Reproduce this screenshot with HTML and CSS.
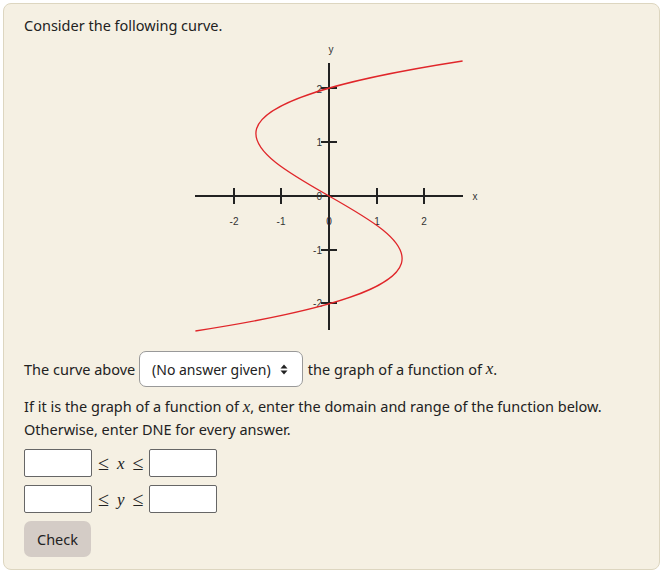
FILE: index.html
```html
<!DOCTYPE html>
<html>
<head>
<meta charset="utf-8">
<link rel="stylesheet" href="styles.css">
</head>
<body>
<div class="card">
  <p class="intro">Consider the following curve.</p>
  <svg class="graph" width="300" height="300" viewBox="180 38 300 300" xmlns="http://www.w3.org/2000/svg">
    <g stroke="#222" stroke-width="2" fill="none">
      <line x1="195" y1="195" x2="463" y2="195"/>
      <line x1="329" y1="62" x2="329" y2="329"/>
      <line x1="234" y1="187" x2="234" y2="203"/>
      <line x1="281" y1="187" x2="281" y2="203"/>
      <line x1="377" y1="187" x2="377" y2="203"/>
      <line x1="424" y1="187" x2="424" y2="203"/>
      <line x1="321" y1="87" x2="337" y2="87"/>
      <line x1="321" y1="141" x2="337" y2="141"/>
      <line x1="321" y1="249" x2="337" y2="249"/>
      <line x1="321" y1="302" x2="337" y2="302"/>
    </g>
    <g class="lbl" fill="#333">
      <text x="331" y="52" text-anchor="middle">y</text>
      <text x="475" y="199" text-anchor="middle">x</text>
      <text x="234" y="224" text-anchor="middle">-2</text>
      <text x="281" y="224" text-anchor="middle">-1</text>
      <text x="329" y="224" text-anchor="middle" fill="#223">0</text>
      <text x="377" y="224" text-anchor="middle">1</text>
      <text x="424" y="224" text-anchor="middle">2</text>
      <text x="322" y="92" text-anchor="end">2</text>
      <text x="322" y="145" text-anchor="end">1</text>
      <text x="322" y="199" text-anchor="end">0</text>
      <text x="322" y="253" text-anchor="end">-1</text>
      <text x="322" y="306" text-anchor="end">-2</text>
    </g>
    <path d="M195.41 330 C779.26 240 -121.26 150 462.59 60" stroke="#e0262a" stroke-width="1.3" fill="none"/>
  </svg>
  <p class="line">The curve above <span class="select">(No answer given)<span class="arrows"><svg width="8" height="11" viewBox="0 0 8 11"><path d="M4 0.5L7.5 4.5H0.5Z M4 10.5L7.5 6.5H0.5Z" fill="#222"/></svg></span></span> the graph of a function of <i class="m">x</i>.</p>
  <p class="para">If it is the graph of a function of <i class="m">x</i>, enter the domain and range of the function below.<br>Otherwise, enter DNE for every answer.</p>
  <div class="ineq">
    <span class="box"></span><span class="rel le1">≤</span><i class="m mv">x</i><span class="rel le2">≤</span><span class="box"></span>
  </div>
  <div class="ineq">
    <span class="box"></span><span class="rel le1">≤</span><i class="m mv">y</i><span class="rel le2">≤</span><span class="box"></span>
  </div>
  <button class="check">Check</button>
</div>
</body>
</html>
```
FILE: styles.css
```css
html, body {
  margin: 0;
  padding: 0;
  background: #ffffff;
}
body {
  font-family: "Noto Sans", "DejaVu Sans", sans-serif;
  font-size: 14.5px;
  color: #222;
}
.card {
  margin: 3px;
  width: 657px;
  height: 567px;
  box-sizing: border-box;
  border: 1px solid #ddd6c0;
  border-radius: 8px;
  background: #f5f0e3;
  padding: 10px 20px;
}
.intro {
  margin: 0;
  line-height: 22px;
}
.graph {
  display: block;
  margin: 3px 0 0 156px;
}
.lbl text {
  font-family: "Liberation Sans", Arial, sans-serif;
  font-size: 10px;
}
.line {
  margin: 12px 0 0 0;
  display: flex;
  align-items: center;
  white-space: pre;
}
.select {
  display: inline-flex;
  align-items: center;
  box-sizing: border-box;
  width: 164px;
  height: 36px;
  padding: 0 0 0 12px;
  margin: 0 1px 0 0;
  background: #fff;
  border: 1px solid #999;
  border-radius: 7px;
  font-size: 14px;
}
.arrows {
  display: inline-flex;
  margin-left: 9px;
}
.m {
  font-family: "Liberation Serif", "DejaVu Serif", serif;
  font-style: italic;
  font-size: 17px;
}
.para {
  margin: 8px 0 0 0;
  line-height: 22px;
}
.ineq {
  display: flex;
  align-items: center;
  margin-top: 9px;
}
.ineq + .ineq {
  margin-top: 8px;
}
.box {
  display: block;
  width: 68px;
  height: 28px;
  box-sizing: border-box;
  background: #fff;
  border: 1px solid #666;
  border-radius: 2px;
}
.rel {
  font-family: "Liberation Serif", "DejaVu Serif", serif;
  font-size: 20px;
  line-height: 1;
}
.le1 {
  margin: 0 8px 0 6px;
}
.le2 {
  margin: 0 5px 0 8px;
}
.mv {
  line-height: 1;
}
.check {
  display: block;
  margin-top: 8px;
  width: 67px;
  height: 36px;
  border: none;
  border-radius: 7px;
  background: #d4ccc6;
  font-family: "Noto Sans", sans-serif;
  font-size: 14.5px;
  color: #222;
  padding: 0;
}
```
